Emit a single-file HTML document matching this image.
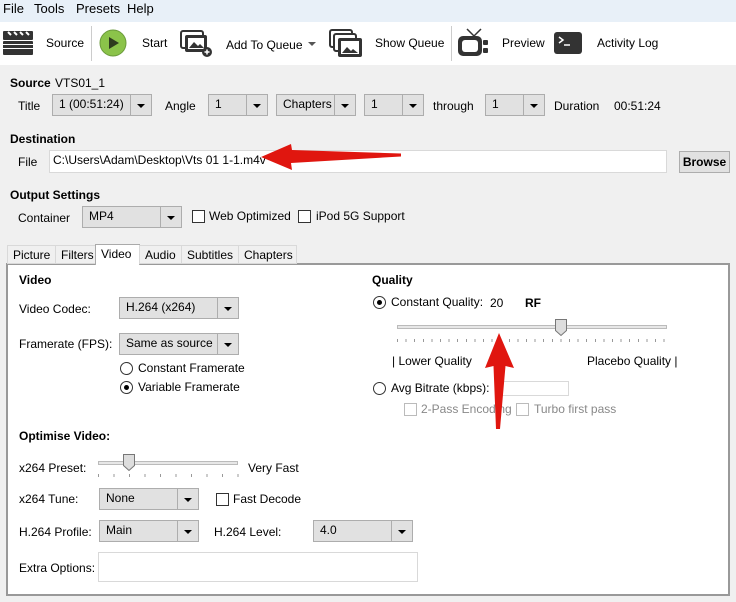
<!DOCTYPE html>
<html><head><meta charset="utf-8">
<style>
*{box-sizing:border-box;margin:0;padding:0}
body{width:736px;height:602px;background:#f0f0f0;font-family:"Liberation Sans",sans-serif;font-size:12px;color:#000;position:relative;overflow:hidden}
.a{position:absolute;white-space:nowrap}
.b{font-weight:bold}
.cb{position:absolute;background:#e1e1e1;border:1px solid #adadad;height:22px;padding:2px 0 0 6px}
.cb:after{content:"";position:absolute;right:0;top:0;bottom:0;width:20px;border-left:1px solid #adadad}
.cb:before{content:"";position:absolute;right:6px;top:9px;border-left:4px solid transparent;border-right:4px solid transparent;border-top:4px solid #000}
.chk{position:absolute;width:13px;height:13px;border:1px solid #333;background:#fff}
.rad{position:absolute;width:13px;height:13px;border:1px solid #333;border-radius:50%;background:#fff}
.rad.on:after{content:"";position:absolute;left:3px;top:3px;width:5px;height:5px;border-radius:50%;background:#000}
.tab{position:absolute;top:245px;height:19px;border:1px solid #d9d9d9;background:#f0f0f0;padding:2px 0 0 5px}
.inp{position:absolute;background:#fff;border:1px solid #d9d9d9}
</style></head><body>
<div class="a" style="left:0;top:0;width:736px;height:22px;background:#e8f0f8"></div>
<div class="a" style="left:3px;top:1px;font-size:13px">File</div>
<div class="a" style="left:34px;top:1px;font-size:13px">Tools</div>
<div class="a" style="left:76px;top:1px;font-size:13px">Presets</div>
<div class="a" style="left:127px;top:1px;font-size:13px">Help</div>
<div class="a" style="left:0;top:22px;width:736px;height:43px;background:#fff"></div>
<div class="a" style="left:91px;top:26px;width:1px;height:35px;background:#ccc"></div>
<div class="a" style="left:451px;top:26px;width:1px;height:35px;background:#ccc"></div>
<svg class="a" style="left:2px;top:30px" width="32" height="26" viewBox="0 0 32 26"><rect x="1" y="1" width="30" height="9" rx="1" fill="#333"/><path d="M6 2l3 3M12 2l3 3M18 2l3 3M24 2l3 3" stroke="#fff" stroke-width="2"/><rect x="1" y="11" width="30" height="14" rx="1" fill="#333"/><path d="M1 14.5h30M1 18.5h30" stroke="#fff" stroke-width="1"/></svg>
<div class="a" style="left:46px;top:36px">Source</div>
<svg class="a" style="left:99px;top:29px" width="28" height="28"><circle cx="14" cy="14" r="13" fill="#8bc34a" stroke="#6a9a3a"/><path d="M10 8l10 6-10 6z" fill="#2e3b1e"/></svg>
<div class="a" style="left:142px;top:36px">Start</div>
<svg class="a" style="left:180px;top:30px" width="34" height="28"><rect x="1" y="1" width="22" height="17" rx="2" fill="#fff" stroke="#333" stroke-width="2"/><rect x="5" y="5" width="22" height="17" rx="2" fill="#333"/><rect x="8" y="8" width="16" height="11" fill="#fff"/><path d="M9 18l5-6 4 4 2-2 4 4z" fill="#333"/><circle cx="27" cy="22" r="5" fill="#333"/><path d="M27 19.5v5M24.5 22h5" stroke="#fff" stroke-width="1.5"/></svg>
<div class="a" style="left:226px;top:38px">Add To Queue</div>
<div class="a" style="left:308px;top:42px;border-left:4px solid transparent;border-right:4px solid transparent;border-top:4px solid #555"></div>
<svg class="a" style="left:329px;top:29px" width="34" height="30"><rect x="1" y="1" width="22" height="17" rx="2" fill="#fff" stroke="#333" stroke-width="2"/><rect x="5" y="5" width="22" height="17" rx="2" fill="#fff" stroke="#333" stroke-width="2"/><rect x="9" y="9" width="24" height="19" rx="2" fill="#333"/><rect x="12" y="12" width="18" height="13" fill="#fff"/><path d="M13 24l5-6 4 4 2-2 5 4z" fill="#333"/></svg>
<div class="a" style="left:375px;top:36px">Show Queue</div>
<svg class="a" style="left:457px;top:27px" width="34" height="31"><path d="M10 2l7 7 7-7" stroke="#333" stroke-width="1.5" fill="none"/><rect x="1" y="9" width="24" height="20" rx="5" fill="#333"/><rect x="5" y="13" width="16" height="12" rx="3" fill="#fff"/><rect x="26" y="13" width="5" height="5" rx="1" fill="#333"/><rect x="26" y="21" width="5" height="5" rx="1" fill="#333"/></svg>
<div class="a" style="left:502px;top:36px">Preview</div>
<svg class="a" style="left:554px;top:32px" width="29" height="23"><rect x="0" y="0" width="28" height="22" rx="3" fill="#333"/><path d="M5 5l4 3-4 3" stroke="#fff" stroke-width="1.5" fill="none"/><path d="M10 13h6" stroke="#fff" stroke-width="1.5"/></svg>
<div class="a" style="left:597px;top:36px">Activity Log</div>

<div class="a b" style="left:10px;top:76px">Source</div>
<div class="a" style="left:55px;top:76px">VTS01_1</div>
<div class="a" style="left:18px;top:99px">Title</div>
<div class="cb" style="left:52px;top:94px;width:100px">1 (00:51:24)</div>
<div class="a" style="left:165px;top:99px">Angle</div>
<div class="cb" style="left:208px;top:94px;width:60px">1</div>
<div class="cb" style="left:276px;top:94px;width:80px">Chapters</div>
<div class="cb" style="left:364px;top:94px;width:60px">1</div>
<div class="a" style="left:433px;top:99px">through</div>
<div class="cb" style="left:485px;top:94px;width:60px">1</div>
<div class="a" style="left:554px;top:99px">Duration</div>
<div class="a" style="left:614px;top:99px">00:51:24</div>

<div class="a b" style="left:10px;top:132px">Destination</div>
<div class="a" style="left:18px;top:155px">File</div>
<div class="inp" style="left:49px;top:150px;width:618px;height:23px;padding:2px 0 0 3px">C:\Users\Adam\Desktop\Vts 01 1-1.m4v</div>
<div class="a b" style="left:679px;top:151px;width:51px;height:22px;background:#e1e1e1;border:1px solid #adadad;text-align:center;padding-top:3px">Browse</div>

<div class="a b" style="left:10px;top:188px">Output Settings</div>
<div class="a" style="left:18px;top:211px">Container</div>
<div class="cb" style="left:82px;top:206px;width:100px">MP4</div>
<div class="chk" style="left:192px;top:210px"></div>
<div class="a" style="left:209px;top:209px">Web Optimized</div>
<div class="chk" style="left:298px;top:210px"></div>
<div class="a" style="left:316px;top:209px">iPod 5G Support</div>

<div class="a" style="left:6px;top:263px;width:724px;height:333px;background:#fff;border:2px solid #999"></div>
<div class="tab" style="left:7px;width:49px">Picture</div>
<div class="tab" style="left:55px;width:41px">Filters</div>
<div class="tab" style="left:95px;top:244px;width:45px;height:21px;background:#fff;border-bottom:none;border-color:#aaa">Video</div>
<div class="tab" style="left:139px;width:43px">Audio</div>
<div class="tab" style="left:181px;width:58px">Subtitles</div>
<div class="tab" style="left:238px;width:59px">Chapters</div>

<div class="a b" style="left:19px;top:273px">Video</div>
<div class="a" style="left:19px;top:302px">Video Codec:</div>
<div class="cb" style="left:119px;top:297px;width:120px">H.264 (x264)</div>
<div class="a" style="left:19px;top:337px">Framerate (FPS):</div>
<div class="cb" style="left:119px;top:333px;width:120px">Same as source</div>
<div class="rad" style="left:120px;top:362px"></div>
<div class="a" style="left:138px;top:361px">Constant Framerate</div>
<div class="rad on" style="left:120px;top:381px"></div>
<div class="a" style="left:138px;top:380px">Variable Framerate</div>

<div class="a b" style="left:372px;top:273px">Quality</div>
<div class="rad on" style="left:373px;top:296px"></div>
<div class="a" style="left:391px;top:295px">Constant Quality:</div>
<div class="a" style="left:490px;top:296px">20</div>
<div class="a b" style="left:525px;top:296px">RF</div>
<div class="a" style="left:397px;top:325px;width:270px;height:4px;background:#e7e7e7;border:1px solid #bbb"></div>
<svg class="a" style="left:555px;top:319px" width="13" height="18"><path d="M0.5 0.5h11v11l-5.5 5-5.5-5z" fill="#ddd" stroke="#777"/></svg>
<div class="a" style="left:397px;top:339px;width:270px;height:3px;background:repeating-linear-gradient(90deg,#999 0 1px,transparent 1px 8.6px)"></div>
<div class="a" style="left:392px;top:354px">| Lower Quality</div>
<div class="a" style="left:587px;top:354px">Placebo Quality |</div>
<div class="rad" style="left:373px;top:382px"></div>
<div class="a" style="left:391px;top:381px">Avg Bitrate (kbps):</div>
<div class="inp" style="left:502px;top:381px;width:67px;height:15px"></div>
<div class="chk" style="left:404px;top:403px;border-color:#bbb"></div>
<div class="a" style="left:421px;top:402px;color:#888">2-Pass Encoding</div>
<div class="chk" style="left:516px;top:403px;border-color:#bbb"></div>
<div class="a" style="left:534px;top:402px;color:#888">Turbo first pass</div>

<div class="a b" style="left:19px;top:429px">Optimise Video:</div>
<div class="a" style="left:19px;top:461px">x264 Preset:</div>
<div class="a" style="left:98px;top:461px;width:140px;height:4px;background:#e7e7e7;border:1px solid #bbb"></div>
<svg class="a" style="left:123px;top:454px" width="13" height="18"><path d="M0.5 0.5h11v11l-5.5 5-5.5-5z" fill="#ddd" stroke="#777"/></svg>
<div class="a" style="left:98px;top:474px;width:141px;height:3px;background:repeating-linear-gradient(90deg,#999 0 1px,transparent 1px 15.5px)"></div>
<div class="a" style="left:248px;top:461px">Very Fast</div>
<div class="a" style="left:19px;top:492px">x264 Tune:</div>
<div class="cb" style="left:99px;top:488px;width:100px">None</div>
<div class="chk" style="left:216px;top:493px"></div>
<div class="a" style="left:233px;top:492px">Fast Decode</div>
<div class="a" style="left:19px;top:525px">H.264 Profile:</div>
<div class="cb" style="left:99px;top:520px;width:100px">Main</div>
<div class="a" style="left:214px;top:525px">H.264 Level:</div>
<div class="cb" style="left:313px;top:520px;width:100px">4.0</div>
<div class="a" style="left:19px;top:561px">Extra Options:</div>
<div class="inp" style="left:98px;top:552px;width:320px;height:30px"></div>

<svg class="a" style="left:0;top:0" width="736" height="602">
<path d="M401 153.5 L292 150 L291 144 L261 157 L292 170 L291 163 L401 156.5 Z" fill="#e0160f"/>
<path d="M496 429 L493.5 366 L485 368 L499 333 L514 368 L505.5 366 L500 429 Z" fill="#e0160f"/>
</svg>
</body></html>
